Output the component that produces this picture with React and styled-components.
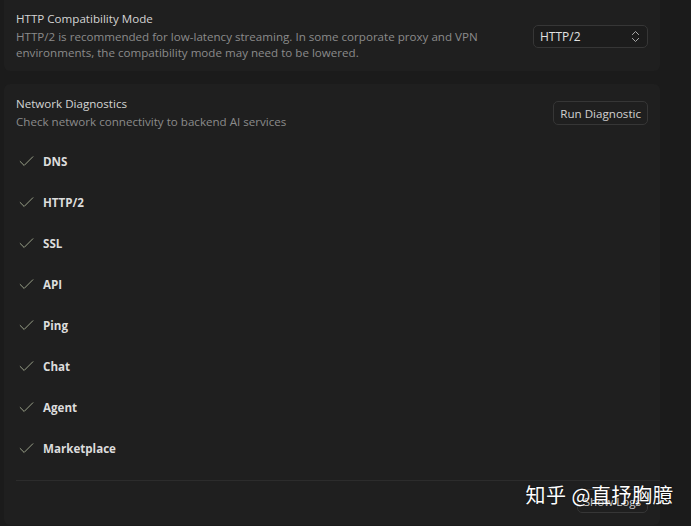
import React from 'react';
import styled, { createGlobalStyle } from 'styled-components';
import { Check, ChevronsUpDown } from 'lucide-react';

const GlobalStyle = createGlobalStyle`
  html, body {
    margin: 0;
    padding: 0;
    background: #1b1b1b;
    font-family: "Segoe UI", "Open Sans", "Noto Sans", sans-serif;
    overflow: hidden;
  }
`;

const Page = styled.div`
  position: relative;
  width: 691px;
  height: 526px;
  overflow: hidden;
  background: #1b1b1b;
`;

const Column = styled.div`
  width: 656px;
  margin-left: 4px;
  display: flex;
  flex-direction: column;
  gap: 13px;
`;

const Card = styled.div`
  background: #1f1f1f;
  border-radius: ${props => props.top ? '0 0 6px 6px' : '6px'};
  padding: ${props => props.top ? '11px 12px 10px' : '12px 12px 0'};
`;

const HeaderRow = styled.div`
  display: flex;
  align-items: center;
  justify-content: space-between;
  gap: 24px;
`;

const TextBlock = styled.div`
  display: flex;
  flex-direction: column;
  gap: 2px;
`;

const Title = styled.div`
  font-size: 11.6px;
  line-height: 16px;
  color: #d4d4d4;
`;

const Description = styled.div`
  font-size: 11.6px;
  line-height: 16px;
  color: #8b8b8b;
  max-width: 470px;
`;

const SelectBox = styled.div`
  width: 115px;
  height: 23px;
  box-sizing: border-box;
  border: 1px solid #363636;
  border-radius: 5px;
  background: #1c1c1c;
  display: flex;
  align-items: center;
  justify-content: space-between;
  padding: 0 4px 0 6px;
  color: #e2e2e2;
  font-size: 12px;
`;

const Button = styled.div`
  height: 24px;
  box-sizing: border-box;
  border: 1px solid #363636;
  border-radius: 5px;
  background: #1f1f1f;
  display: flex;
  align-items: center;
  padding: 0 6px;
  color: #d0d0d0;
  font-size: 11.6px;
  white-space: nowrap;
`;

const List = styled.div`
  display: flex;
  flex-direction: column;
  margin-top: 11px;
`;

const Item = styled.div`
  height: 41px;
  display: flex;
  align-items: center;
  gap: 7px;
  padding-left: 1px;
  color: #dcdcdc;
  font-size: 11.6px;
  font-weight: 700;
`;

const Divider = styled.div`
  height: 1px;
  background: #2c2c2c;
  margin: 11px -12px 0 0;
`;

const Footer = styled.div`
  display: flex;
  justify-content: flex-end;
  padding: 8px 0 12px;
`;

const Watermark = styled.div`
  position: absolute;
  right: 18px;
  bottom: 17px;
  font-family: "Noto Sans CJK SC", sans-serif;
  font-size: 20px;
  color: #ffffff;
  letter-spacing: 0.5px;
  text-shadow: 0 0 2px rgba(0, 0, 0, 0.6);
`;

const checks = ['DNS', 'HTTP/2', 'SSL', 'API', 'Ping', 'Chat', 'Agent', 'Marketplace'];

export default function App() {
  return (
    <Page>
      <GlobalStyle />
      <Column>
        <Card top>
          <HeaderRow>
            <TextBlock>
              <Title>HTTP Compatibility Mode</Title>
              <Description>
                HTTP/2 is recommended for low-latency streaming. In some corporate proxy and VPN environments, the compatibility mode may need to be lowered.
              </Description>
            </TextBlock>
            <SelectBox>
              HTTP/2
              <ChevronsUpDown size={15} strokeWidth={1.6} color="#a8a8a8" />
            </SelectBox>
          </HeaderRow>
        </Card>

        <Card>
          <HeaderRow>
            <TextBlock>
              <Title>Network Diagnostics</Title>
              <Description>Check network connectivity to backend AI services</Description>
            </TextBlock>
            <Button>Run Diagnostic</Button>
          </HeaderRow>
          <List>
            {checks.map(name => (
              <Item key={name}>
                <Check size={19} strokeWidth={1.2} color="#a0a88e" />
                {name}
              </Item>
            ))}
          </List>
          <Divider />
          <Footer>
            <Button>Show Logs</Button>
          </Footer>
        </Card>
      </Column>
      <Watermark>知乎 @直抒胸臆</Watermark>
    </Page>
  );
}
